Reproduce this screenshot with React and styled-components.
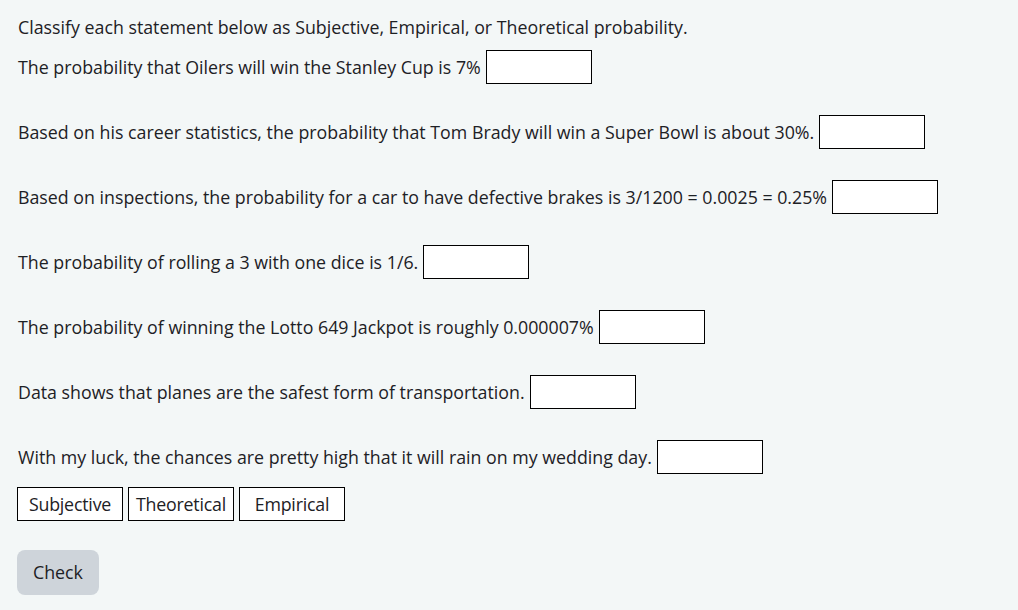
import React from "react";
import styled, { createGlobalStyle } from "styled-components";

const Global = createGlobalStyle`
  html, body { margin: 0; padding: 0; background: #f3f7f7; }
  body { font-family: "Open Sans", "Noto Sans", sans-serif; color: #1d2125; }
`;

const Page = styled.div`
  padding: 14px 18px 16px 17px;
  font-size: 17.8px;
`;

const Title = styled.p`
  margin: 0 0 10px 1px;
  height: 26px;
  line-height: 26px;
`;

const Row = styled.div`
  display: flex;
  align-items: center;
  height: 34px;
  margin: 0 0 31px 1px;
  &:last-of-type { margin-bottom: 13px; }
`;

const Statement = styled.span`
  white-space: nowrap;
`;

const Drop = styled.span`
  display: inline-block;
  flex: none;
  box-sizing: border-box;
  width: 106px;
  height: 34px;
  margin-left: 5px;
  background: #fff;
  border: 1px solid #000;
`;

const Choices = styled.div`
  display: flex;
  gap: 5px;
  margin-bottom: 29px;
`;

const Choice = styled.span`
  box-sizing: border-box;
  width: 106px;
  height: 34px;
  display: flex;
  align-items: center;
  justify-content: center;
  background: #fff;
  border: 1px solid #000;
  white-space: nowrap;
  letter-spacing: -0.2px;
`;

const CheckButton = styled.button`
  box-sizing: border-box;
  width: 82px;
  height: 45px;
  padding: 0 0 2px;
  border: none;
  border-radius: 8px;
  background: #ced4da;
  color: #1d2125;
  font: inherit;
  font-size: 17.8px;
`;

const statements = [
  "The probability that Oilers will win the Stanley Cup is 7%",
  "Based on his career statistics, the probability that Tom Brady will win a Super Bowl is about 30%.",
  "Based on inspections, the probability for a car to have defective brakes is 3/1200 = 0.0025 = 0.25%",
  "The probability of rolling a 3 with one dice is 1/6.",
  "The probability of winning the Lotto 649 Jackpot is roughly 0.000007%",
  "Data shows that planes are the safest form of transportation.",
  "With my luck, the chances are pretty high that it will rain on my wedding day.",
];

const choices = ["Subjective", "Theoretical", "Empirical"];

export default function App() {
  return (
    <>
      <Global />
      <Page>
        <Title>Classify each statement below as Subjective, Empirical, or Theoretical probability.</Title>
        <div>
          {statements.map((s) => (
            <Row key={s}>
              <Statement>{s}</Statement>
              <Drop />
            </Row>
          ))}
        </div>
        <Choices>
          {choices.map((c) => (
            <Choice key={c}>{c}</Choice>
          ))}
        </Choices>
        <CheckButton>Check</CheckButton>
      </Page>
    </>
  );
}
